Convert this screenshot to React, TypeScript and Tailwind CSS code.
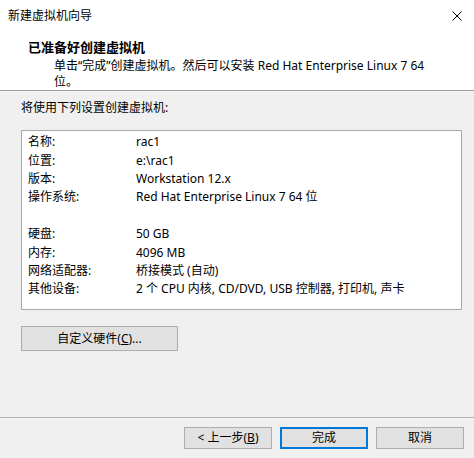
const rows: [string, string][] = [
  ['名称:', 'rac1'],
  ['位置:', 'e:\\rac1'],
  ['版本:', 'Workstation 12.x'],
  ['操作系统:', 'Red Hat Enterprise Linux 7 64 位'],
  ['', ''],
  ['硬盘:', '50 GB'],
  ['内存:', '4096 MB'],
  ['网络适配器:', '桥接模式 (自动)'],
  ['其他设备:', '2 个 CPU 内核, CD/DVD, USB 控制器, 打印机, 声卡'],
];

export default function App() {
  return (
    <div className="w-[474px] h-[458px] bg-[#f0f0f0] flex flex-col text-[12px] text-black font-['Noto_Sans','Noto_Sans_CJK_SC',sans-serif]">
      {/* title bar + header */}
      <div className="bg-white border-b border-[#a0a0a0] h-[91px] flex flex-col">
        <div className="h-[31px] flex items-center justify-between pl-[8px] pr-[12px]">
          <span className="text-[12px] leading-[16px]">新建虚拟机向导</span>
          <svg width="10" height="10" viewBox="0 0 10 10" className="text-black">
            <path d="M0.5 0.5 L9.5 9.5 M9.5 0.5 L0.5 9.5" stroke="currentColor" strokeWidth="1" fill="none" />
          </svg>
        </div>
        <div className="pl-[28px] pt-[8px]">
          <div className="font-bold text-[13px] leading-[17px]">已准备好创建虚拟机</div>
          <div className="pl-[26px] mt-[2px] leading-[16px]">
            <div>单击“完成”创建虚拟机。然后可以安装 Red Hat Enterprise Linux 7 64</div>
            <div>位。</div>
          </div>
        </div>
      </div>

      {/* body */}
      <div className="flex-1 flex flex-col px-[21px]">
        <div className="mt-[9px] leading-[16px]">将使用下列设置创建虚拟机:</div>
        <div className="mt-[14px] w-[441px] h-[180px] bg-white border border-[#a8a8a8] pt-[2px] pl-[6px]">
          {rows.map(([k, v], i) => (
            <div key={i} className="flex h-[18.4px] items-center">
              <span className="w-[108px] shrink-0">{k}</span>
              <span>{v}</span>
            </div>
          ))}
        </div>
        <button className="mt-[16px] w-[157px] h-[25px] bg-[#e1e1e1] border border-[#adadad] flex items-center justify-center">
          <span>
            自定义硬件(<span className="underline">C</span>)...
          </span>
        </button>
      </div>

      {/* footer */}
      <div className="border-t border-[#b4b4b4] h-[41px] flex items-start justify-end gap-[8px] pt-[9px] pr-[10px]">
        <button className="w-[88px] h-[22px] bg-[#e1e1e1] border border-[#adadad] flex items-center justify-center">
          <span>
            &lt; 上一步(<span className="underline">B</span>)
          </span>
        </button>
        <button className="w-[88px] h-[22px] bg-[#e1e1e1] border-2 border-[#0078d7] flex items-center justify-center">
          完成
        </button>
        <button className="w-[88px] h-[22px] bg-[#e1e1e1] border border-[#adadad] flex items-center justify-center">
          取消
        </button>
      </div>
    </div>
  );
}
